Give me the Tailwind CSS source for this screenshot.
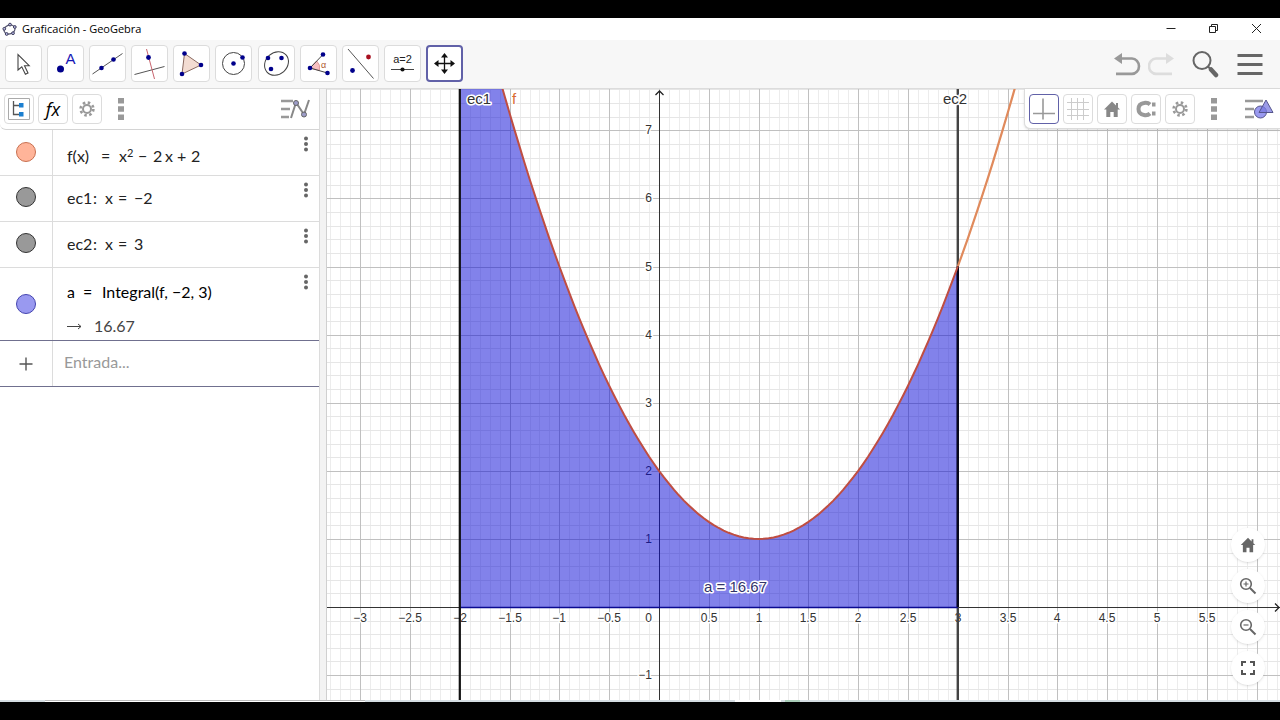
<!DOCTYPE html>
<html lang="es">
<head>
  <meta charset="UTF-8">
  <meta name="viewport" content="width=device-width, initial-scale=1">
  <title>Graficación - GeoGebra</title>
  <script src="https://cdn.jsdelivr.net/npm/@tailwindcss/browser@4"></script>
</head>
<body class="h-screen flex flex-col bg-black overflow-hidden font-['Liberation_Sans',sans-serif]">
  <div class="flex-1 min-h-0 my-[18px] flex flex-col bg-white">

    <!-- title bar -->
    <header class="h-[22px] flex items-center shrink-0 bg-white text-black">
      <svg class="ml-[2px] w-[15px] h-[15px]" viewBox="0 0 15 15" fill="none" stroke="#555570">
        <ellipse cx="7.5" cy="7.5" rx="5.6" ry="4.4" transform="rotate(-20 7.5 7.5)" stroke-width="1.2"/>
        <g fill="#b9b9e6" stroke="#333350" stroke-width=".9">
          <circle cx="2.3" cy="6.8" r="1.4"/><circle cx="8" cy="2.6" r="1.4"/><circle cx="12.8" cy="5" r="1.4"/><circle cx="11" cy="11.2" r="1.4"/><circle cx="4.7" cy="12" r="1.4"/>
        </g>
      </svg>
      <h1 class="ml-[5px] text-[11px] leading-4 font-['Open_Sans',sans-serif]">Graficación - GeoGebra</h1>
      <div class="ml-auto mr-[2px] flex">
        <button aria-label="Minimizar" class="w-[43px] h-5 flex items-center justify-center">
          <svg class="w-3 h-3" viewBox="0 0 12 12" stroke="#222"><path d="M1.5 5.5h9"/></svg>
        </button>
        <button aria-label="Restaurar" class="w-[43px] h-5 flex items-center justify-center">
          <svg class="w-3 h-3" viewBox="0 0 12 12" fill="none" stroke="#222"><path d="M1.5 3.5h6v6h-6zM3.5 3.5v-2h6v6h-2"/></svg>
        </button>
        <button aria-label="Cerrar" class="w-[43px] h-5 flex items-center justify-center">
          <svg class="w-3 h-3" viewBox="0 0 12 12" stroke="#222"><path d="M1 1l9 9M10 1l-9 9"/></svg>
        </button>
      </div>
    </header>

    <!-- tools -->
    <nav class="h-[49px] shrink-0 flex items-center justify-between bg-[#f7f7f7] border-b border-[#dcdcdc] pl-[5px] pr-4 pb-px">
      <div class="flex justify-between w-[458px]">
        <button aria-label="Elige y mueve" class="w-[37px] h-[37px] rounded border border-[#dcdcdc] bg-white">
          <svg class="w-[35px] h-[35px]" viewBox="0 0 35 35" fill="#fff" stroke="#444" stroke-width="1.1"><path d="M12 8.5v15.500l3.800-3.200 3.600 7.500 2.600-1.300-3.500-7.300h4.700z"/></svg>
        </button>
        <button aria-label="Punto" class="w-[37px] h-[37px] rounded border border-[#dcdcdc] bg-white">
          <svg class="w-[35px] h-[35px]" viewBox="0 0 35 35"><circle cx="12.500" cy="23" r="3.500" fill="#00008b"/><text x="17.500" y="18" font-size="15" fill="#1515b5">A</text></svg>
        </button>
        <button aria-label="Recta" class="w-[37px] h-[37px] rounded border border-[#dcdcdc] bg-white">
          <svg class="w-[35px] h-[35px]" viewBox="0 0 35 35"><path d="M2.500 28L32.500 7.500" stroke="#555"/><g fill="#00008b"><circle cx="11.500" cy="22" r="2.300"/><circle cx="23.500" cy="13.500" r="2.300"/></g></svg>
        </button>
        <button aria-label="Perpendicular" class="w-[37px] h-[37px] rounded border border-[#dcdcdc] bg-white">
          <svg class="w-[35px] h-[35px]" viewBox="0 0 35 35"><path d="M2.500 28.500L32.500 20.500" stroke="#555"/><path d="M14.500 3l8 30" stroke="#c8646e"/><circle cx="16.500" cy="11.500" r="2.400" fill="#00008b"/></svg>
        </button>
        <button aria-label="Polígono" class="w-[37px] h-[37px] rounded border border-[#dcdcdc] bg-white">
          <svg class="w-[35px] h-[35px]" viewBox="0 0 35 35"><path d="M10.500 7.500L27 19 8 28z" fill="#f3dcd2" stroke="#8a6a60"/><g fill="#00008b"><circle cx="10.500" cy="7.500" r="2.300"/><circle cx="27" cy="19" r="2.300"/><circle cx="8" cy="28" r="2.300"/></g></svg>
        </button>
        <button aria-label="Circunferencia" class="w-[37px] h-[37px] rounded border border-[#dcdcdc] bg-white">
          <svg class="w-[35px] h-[35px]" viewBox="0 0 35 35"><circle cx="17.500" cy="17.500" r="11" fill="none" stroke="#444"/><g fill="#00008b"><circle cx="17.500" cy="17.500" r="2.300"/><circle cx="26.500" cy="11.500" r="2.300"/></g></svg>
        </button>
        <button aria-label="Elipse" class="w-[37px] h-[37px] rounded border border-[#dcdcdc] bg-white">
          <svg class="w-[35px] h-[35px]" viewBox="0 0 35 35"><ellipse cx="17.500" cy="17.500" rx="12.800" ry="10.800" transform="rotate(-42 17.500 17.500)" fill="none" stroke="#444"/><g fill="#00008b"><circle cx="9" cy="12" r="2.300"/><circle cx="22.500" cy="12" r="2.300"/><circle cx="12" cy="23" r="2.300"/></g></svg>
        </button>
        <button aria-label="Ángulo" class="w-[37px] h-[37px] rounded border border-[#dcdcdc] bg-white">
          <svg class="w-[35px] h-[35px]" viewBox="0 0 35 35"><path d="M9 22l6.700-7a9.500 9.500 0 0 1 2.700 9.400z" fill="#f8c0c0" stroke="#e09a9a"/><path d="M22 8.500L9 22l17.500 5" fill="none" stroke="#444"/><g fill="#00008b"><circle cx="22" cy="8.500" r="2.300"/><circle cx="9" cy="22" r="2.300"/><circle cx="26.500" cy="27" r="2.300"/></g><text x="20" y="21.500" font-size="9" fill="#b05a30">α</text></svg>
        </button>
        <button aria-label="Simetría" class="w-[37px] h-[37px] rounded border border-[#dcdcdc] bg-white">
          <svg class="w-[35px] h-[35px]" viewBox="0 0 35 35"><path d="M5 3l25.500 29.500" stroke="#555"/><circle cx="9.500" cy="24.500" r="2.400" fill="#00008b"/><circle cx="25.500" cy="11" r="2.400" fill="#a81020"/></svg>
        </button>
        <button aria-label="Deslizador" class="w-[37px] h-[37px] rounded border border-[#dcdcdc] bg-white">
          <svg class="w-[35px] h-[35px]" viewBox="0 0 35 35"><text x="17.500" y="17" font-size="11" text-anchor="middle" fill="#222">a=2</text><path d="M6 23.500h23" stroke="#444"/><circle cx="17.500" cy="23.500" r="2.100" fill="#111"/></svg>
        </button>
        <button aria-label="Desplaza vista gráfica" aria-pressed="true" class="w-[37px] h-[37px] rounded border-2 border-[#6161a8] bg-white">
          <svg class="w-[33px] h-[33px]" viewBox="0 0 33 33" fill="#111"><path d="M16.500 9v15M9 16.500h15" stroke="#111" stroke-width="1.300"/><path d="M16.500 6l3.500 4.500h-7zM16.500 27l3.500-4.500h-7zM6 16.500l4.500-3.500v7zM27 16.500l-4.500-3.500v7z"/></svg>
        </button>
      </div>
      <div class="flex items-center">
        <button aria-label="Deshacer" class="w-7 h-7">
          <svg class="w-7 h-7" viewBox="0 0 28 28"><path d="M7 8.500h11a7 7.700 0 0 1 0 15.400H2" fill="none" stroke="#999" stroke-width="2.600"/><path d="M0 8.500L8 3v11z" fill="#999"/></svg>
        </button>
        <button aria-label="Rehacer" class="ml-[6px] w-7 h-7">
          <svg class="w-7 h-7" viewBox="0 0 28 28"><path d="M18 8.500H8a7 7.700 0 0 0 0 15.400h16" fill="none" stroke="#ddd" stroke-width="2.600"/><path d="M26 8.500L18 3v11z" fill="#ddd"/></svg>
        </button>
        <button aria-label="Buscar" class="ml-4 w-7 h-7">
          <svg class="w-7 h-7" viewBox="0 0 28 28" fill="none" stroke="#666"><circle cx="10" cy="10.500" r="8.500" stroke-width="2"/><path d="M16 16.500l4 4" stroke-width="2"/><path d="M19 19.500l5 5.500" stroke-width="4.500" stroke-linecap="round"/></svg>
        </button>
        <button aria-label="Menú" class="ml-4 w-7 h-7">
          <svg class="w-7 h-7" viewBox="0 0 28 28" stroke="#666" stroke-width="3"><path d="M1.500 5.500h25M1.500 14.500h25M1.500 23.500h25"/></svg>
        </button>
      </div>
    </nav>

    <main class="flex-1 min-h-0 flex">
      <!-- algebra view -->
      <section class="w-[320px] shrink-0 flex flex-col border-r border-[#dcdcdc]">
        <div class="h-[41px] shrink-0 flex items-center pl-1 pr-[9px] border-b border-[#d4d4d4] rounded-bl-md">
          <button aria-label="Ordenar" class="w-[30px] h-[30px] rounded border border-[#dcdcdc] flex items-center justify-center">
            <svg class="w-6 h-6" viewBox="0 0 24 24" fill="none"><path d="M1.500 1.500h21v21h-21z" stroke="#aaa"/><path d="M6.500 4v13.500h6M6.500 8.500h6" stroke="#555" stroke-width="1.300"/><path d="M12 6h4.500v4.500H12zM12 15h4.500v4.500H12z" fill="#1b7fd0"/></svg>
          </button>
          <button aria-label="Descripción" class="ml-1 w-[30px] h-[30px] rounded border border-[#dcdcdc] text-[18px] leading-6 italic text-black font-['Open_Sans',sans-serif]">fx</button>
          <button aria-label="Configuración" class="ml-1 w-[30px] h-[30px] rounded border border-[#dcdcdc] flex items-center justify-center">
            <svg class="w-4 h-4" viewBox="0 0 16 16" fill="none" stroke="#999"><circle cx="8" cy="8" r="4" stroke-width="2"/><circle cx="8" cy="8" r="6.400" stroke-width="2.600" stroke-dasharray="2.500 2.526"/></svg>
          </button>
          <button aria-label="Más" class="ml-[11px] w-4 h-6">
            <svg class="w-4 h-6" viewBox="0 0 16 24" fill="#999"><path d="M5 1h6v5.500H5zM5 9.300h6v5.500H5zM5 17.500h6v5.500H5z"/></svg>
          </button>
          <button aria-label="Barra de estilo" class="ml-auto w-[30px] h-6">
            <svg class="w-[30px] h-6" viewBox="0 0 30 24" fill="none" stroke="#999" stroke-width="2.400"><path d="M1 4h12M1 12h9M1 20h8"/><path d="M11 21l5-15.500L24 17.500l5-14.500" stroke="#888" stroke-width="2"/><g fill="#9c9cc8" stroke="#666" stroke-width="1"><circle cx="16" cy="6" r="2.500"/><circle cx="24" cy="17.500" r="2.500"/></g></svg>
          </button>
        </div>

        <ul class="text-[16px] leading-5 text-[#222] font-['Lato',sans-serif]">
          <li class="h-[46px] flex border-b border-[#dcdcdc]">
            <div class="w-[53px] shrink-0 flex justify-center pt-3 border-r border-[#dcdcdc]"><button aria-label="Mostrar f" class="w-5 h-5 rounded-full border border-[#c87050] bg-[#ffb499]"></button></div>
            <div class="flex-1 pl-[14px] pt-4 flex">
              <span class="w-[34px]">f(x)</span><span class="w-[18px]">=</span><span class="w-[19px]">x<sup class="text-[11px]">2</sup></span><span class="w-[15px]">−</span><span class="w-3">2</span><span class="w-3">x</span><span class="w-[14px]">+</span><span>2</span>
            </div>
            <button aria-label="Opciones f" class="w-6 h-7"><svg class="w-6 h-7" viewBox="0 0 24 28" fill="#666"><circle cx="11" cy="8.500" r="2"/><circle cx="11" cy="14" r="2"/><circle cx="11" cy="19.500" r="2"/></svg></button>
          </li>
          <li class="h-[46px] flex border-b border-[#dcdcdc]">
            <div class="w-[53px] shrink-0 flex justify-center pt-[11px] border-r border-[#dcdcdc]"><button aria-label="Mostrar ec1" class="w-5 h-5 rounded-full border border-[#333] bg-[#999]"></button></div>
            <div class="flex-1 pl-[14px] pt-3 flex">
              <span class="w-[26px]">ec1</span><span class="w-3">:</span><span class="w-[13px]">x</span><span class="w-4">=</span><span>−2</span>
            </div>
            <button aria-label="Opciones ec1" class="w-6 h-7"><svg class="w-6 h-7" viewBox="0 0 24 28" fill="#666"><circle cx="11" cy="8.500" r="2"/><circle cx="11" cy="14" r="2"/><circle cx="11" cy="19.500" r="2"/></svg></button>
          </li>
          <li class="h-[46px] flex border-b border-[#dcdcdc]">
            <div class="w-[53px] shrink-0 flex justify-center pt-[11px] border-r border-[#dcdcdc]"><button aria-label="Mostrar ec2" class="w-5 h-5 rounded-full border border-[#333] bg-[#999]"></button></div>
            <div class="flex-1 pl-[14px] pt-3 flex">
              <span class="w-[26px]">ec2</span><span class="w-3">:</span><span class="w-[13px]">x</span><span class="w-4">=</span><span>3</span>
            </div>
            <button aria-label="Opciones ec2" class="w-6 h-7"><svg class="w-6 h-7" viewBox="0 0 24 28" fill="#666"><circle cx="11" cy="8.500" r="2"/><circle cx="11" cy="14" r="2"/><circle cx="11" cy="19.500" r="2"/></svg></button>
          </li>
          <li class="h-[73px] flex border-b border-[#70708f]">
            <div class="w-[53px] shrink-0 flex justify-center items-center border-r border-[#dcdcdc]"><button aria-label="Mostrar a" class="w-5 h-5 rounded-full border border-[#4444b0] bg-[#9999f0]"></button></div>
            <div class="flex-1 pl-[14px] pt-[14px]">
              <div class="flex text-black"><span class="w-4">a</span><span class="w-[19px]">=</span><span>Integral(f, −2, 3)</span></div>
              <div class="mt-[14px] flex items-center text-[#444]">
                <svg class="w-[15px] h-2" viewBox="0 0 15 8" fill="none" stroke="#444"><path d="M0 4.500h14M11 2l3 2.500-3 2.500"/></svg>
                <span class="ml-3">16.67</span>
              </div>
            </div>
            <button aria-label="Opciones a" class="w-6 h-7"><svg class="w-6 h-7" viewBox="0 0 24 28" fill="#666"><circle cx="11" cy="8.500" r="2"/><circle cx="11" cy="14" r="2"/><circle cx="11" cy="19.500" r="2"/></svg></button>
          </li>
          <li class="h-[46px] flex border-b border-[#70708f]">
            <label for="entrada" aria-label="Entrada" class="w-[53px] shrink-0 flex justify-center items-center border-r border-[#dcdcdc]">
              <svg class="w-[14px] h-[14px]" viewBox="0 0 14 14" stroke="#555" stroke-width="1.400"><path d="M7 .5v13M.5 7h13"/></svg>
            </label>
            <input id="entrada" type="text" placeholder="Entrada..." class="flex-1 min-w-0 pl-[11px] pb-1 outline-none placeholder:text-[#999]">
          </li>
        </ul>
      </section>

      <div class="w-[7px] shrink-0 bg-[#f3f3f3] border-r border-[#d0d0d0]"></div>

      <!-- graphics view -->
      <section class="relative flex-1 min-w-0">
        <svg id="graph" class="block w-full h-full overflow-hidden"></svg>

        <div class="absolute top-0 right-0 h-10 w-[256px] flex items-center pl-1 pr-[6px] bg-white border-l border-b border-[#dcdcdc] rounded-bl-md shadow-sm">
          <button aria-label="Ejes" aria-pressed="true" class="w-[30px] h-[30px] rounded border border-[#6161a8] flex items-center justify-center">
            <svg class="w-6 h-6" viewBox="0 0 24 24" stroke="#999" stroke-width="1.600"><path d="M11 1.500v21M1 16.500h22"/></svg>
          </button>
          <button aria-label="Cuadrícula" class="ml-1 w-[30px] h-[30px] rounded border border-[#dcdcdc] flex items-center justify-center">
            <svg class="w-6 h-6" viewBox="0 0 24 24" stroke="#ccc"><path d="M5.500 1v22M11.500 1v22M17.500 1v22M1 5.500h22M1 12.500h22M1 18.500h22"/></svg>
          </button>
          <button aria-label="Vista estándar" class="ml-1 w-[30px] h-[30px] rounded border border-[#dcdcdc] flex items-center justify-center">
            <svg class="w-5 h-5" viewBox="0 0 20 20" fill="#888"><path d="M10 2.500L2 10.500h2.300v7.500h4v-5h3.400v5h4v-7.500H18l-2-2V4h-2v2.500z"/></svg>
          </button>
          <button aria-label="Atracción a punto" class="ml-1 w-[30px] h-[30px] rounded border border-[#dcdcdc] flex items-center justify-center">
            <svg class="w-6 h-6" viewBox="0 0 24 24" fill="none" stroke="#999" stroke-width="4"><path d="M16 7.500c-1.500-1.500-3.500-2-6-1.500-3 .5-5.500 2.500-5.500 6s2.500 5.500 5.500 6c2.500.5 4.500 0 6-1.500"/><path d="M18 7.500h3.500M18 16.500h3.500"/></svg>
          </button>
          <button aria-label="Configuración gráfica" class="ml-1 w-[30px] h-[30px] rounded border border-[#dcdcdc] flex items-center justify-center">
            <svg class="w-4 h-4" viewBox="0 0 16 16" fill="none" stroke="#999"><circle cx="8" cy="8" r="4" stroke-width="2"/><circle cx="8" cy="8" r="6.400" stroke-width="2.600" stroke-dasharray="2.500 2.526"/></svg>
          </button>
          <button aria-label="Más opciones" class="ml-[11px] w-4 h-6">
            <svg class="w-4 h-6" viewBox="0 0 16 24" fill="#999"><path d="M5 1h6v5.500H5zM5 9.300h6v5.500H5zM5 17.500h6v5.500H5z"/></svg>
          </button>
          <button aria-label="Barra de estilo gráfica" class="ml-auto w-[30px] h-6">
            <svg class="w-[30px] h-6" viewBox="0 0 30 24"><path d="M1 4h18M1 12h9M1 20h9" stroke="#999" stroke-width="2.400"/><circle cx="16.500" cy="15" r="6" fill="#9a9af0" stroke="#55558c"/><path d="M22 3l7 12.500H15z" fill="#7a7ae0" fill-opacity=".75" stroke="#55558c"/></svg>
          </button>
        </div>

        <div class="absolute right-[15px] bottom-[15px] flex flex-col gap-[7px]">
          <button aria-label="Inicio" class="w-[34px] h-[34px] rounded-full bg-white shadow flex items-center justify-center">
            <svg class="w-[18px] h-[18px]" viewBox="0 0 20 20" fill="#666"><path d="M10 2L2 10h2.300v8h4v-5h3.400v5h4v-8H18l-2-2V3.500h-2V6z"/></svg>
          </button>
          <button aria-label="Acercar" class="w-[34px] h-[34px] rounded-full bg-white shadow flex items-center justify-center">
            <svg class="w-[18px] h-[18px]" viewBox="0 0 18 18" fill="none" stroke="#666"><circle cx="7" cy="7" r="5.300" stroke-width="1.600"/><path d="M11 11l5.500 5.500" stroke-width="2"/><path d="M4.500 7h5M7 4.500v5" stroke-width="1.200"/></svg>
          </button>
          <button aria-label="Alejar" class="w-[34px] h-[34px] rounded-full bg-white shadow flex items-center justify-center">
            <svg class="w-[18px] h-[18px]" viewBox="0 0 18 18" fill="none" stroke="#666"><circle cx="7" cy="7" r="5.300" stroke-width="1.600"/><path d="M11 11l5.500 5.500" stroke-width="2"/><path d="M4.500 7h5" stroke-width="1.200"/></svg>
          </button>
          <button aria-label="Pantalla completa" class="w-[34px] h-[34px] rounded-full bg-white shadow flex items-center justify-center">
            <svg class="w-[14px] h-[14px]" viewBox="0 0 14 14" fill="none" stroke="#555" stroke-width="2"><path d="M1 5V1h4M9 1h4v4M13 9v4H9M5 13H1V9"/></svg>
          </button>
        </div>
      </section>
    </main>

    <!-- edge of the taskbar -->
    <footer class="h-[2px] shrink-0 flex bg-[#d5dde2]">
      <div class="ml-[45px] w-[320px] bg-white border-t border-[#bbb]"></div>
      <div class="ml-[370px] w-[46px] bg-white"></div>
      <div class="ml-1 w-[15px] bg-[#a9cdb8]"></div>
    </footer>
  </div>

  <script>
    const svg = document.getElementById('graph');
    const NS = 'http://www.w3.org/2000/svg';
    const OX = 332, OY = 518;      // origin inside the view
    const UX = 99.6, UY = 68.1;    // pixels per unit

    const px = x => OX + x * UX;
    const py = y => OY - y * UY;
    const f = x => x * x - 2 * x + 2;
    const snap = v => Math.round(v) + 0.5;

    function add(name, attrs, text) {
      const el = document.createElementNS(NS, name);
      for (const k in attrs) el.setAttribute(k, attrs[k]);
      if (text !== undefined) el.textContent = text;
      svg.appendChild(el);
      return el;
    }

    function line(x1, y1, x2, y2, stroke, width = 1) {
      add('line', { x1, y1, x2, y2, stroke, 'stroke-width': width });
    }

    function label(x, y, text, size, anchor, fill = '#333') {
      add('text', {
        x, y, fill, 'font-size': size, 'text-anchor': anchor,
        stroke: '#fff', 'stroke-width': 3, 'stroke-linejoin': 'round', 'paint-order': 'stroke'
      }, text);
    }

    function curve(from, to) {
      const pts = [];
      for (let x = from; x <= to + 0.001; x += 0.05) pts.push(px(x).toFixed(1) + ',' + py(f(x)).toFixed(1));
      return pts.join(' ');
    }

    const vline = (i, color) => line(snap(px(i / 10)), 0, snap(px(i / 10)), '100%', color);
    const hline = (j, color) => line(0, snap(py(j / 5)), '100%', snap(py(j / 5)), color);

    // grid, light lines first; goes past the edge so wide windows are covered
    for (let i = -33; i <= 250; i++) if (i % 5) vline(i, '#ececec');
    for (let j = -50; j <= 38; j++) if (j % 5) hline(j, '#e6e6e6');
    for (let i = -30; i <= 250; i += 5) vline(i, '#c0c0c0');
    for (let j = -50; j <= 35; j += 5) hline(j, '#c0c0c0');

    // axes
    line(OX + 0.5, 2, OX + 0.5, '100%', '#333');
    line(0, OY + 0.5, '100%', OY + 0.5, '#333');
    add('path', { d: `M${OX - 3.5} 6l4-4 4 4`, fill: 'none', stroke: '#222', 'stroke-width': 1.3 });
    const tip = add('svg', { x: '100%', y: OY, overflow: 'visible' });
    tip.innerHTML = '<path d="M-5 -3.500l4 4-4 4" fill="none" stroke="#222" stroke-width="1.300"/>';

    for (let i = -6; i <= 11; i++) {
      if (i !== 0) label(Math.round(px(i / 2)), OY + 15, String(i / 2).replace('-', '−'), 12, 'middle');
    }
    label(325, OY + 15, '0', 12, 'end');
    for (let j = -1; j <= 7; j++) {
      if (j !== 0) label(325, Math.round(py(j)) + 4, String(j).replace('-', '−'), 12, 'end');
    }

    // ec1, ec2, f and the integral
    line(px(3), 0, px(3), '100%', '#444', 2.4);
    add('polyline', { points: curve(3, 3.6), fill: 'none', stroke: '#e08a5c', 'stroke-width': 2.2 });
    add('polygon', { points: `${px(-2)},${OY + 0.5} ${curve(-2, 3)} ${px(3)},${OY + 0.5}`, fill: '#0505d5', 'fill-opacity': 0.5 });
    line(px(-2), OY + 0.5, px(3), OY + 0.5, '#0a0a90', 1.4);
    line(px(3), py(5), px(3), OY, '#08081c', 2.4);
    add('polyline', { points: curve(-2, 3), fill: 'none', stroke: '#bf4e42', 'stroke-width': 2 });
    line(px(-2), 0, px(-2), '100%', '#111', 2.2);

    label(140, 15, 'ec1', 15, 'start');
    label(185, 15, 'f', 15, 'start', '#d96a30');
    label(616, 15, 'ec2', 15, 'start');
    label(377, 503, 'a = 16.67', 15, 'start', '#33336a');
  </script>
</body>
</html>
